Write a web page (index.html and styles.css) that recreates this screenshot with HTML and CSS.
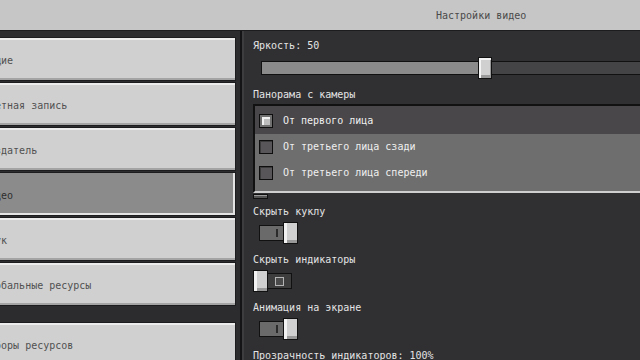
FILE: index.html
```html
<!DOCTYPE html>
<html lang="ru">
<head>
<meta charset="utf-8">
<title>Настройки видео</title>
<link rel="stylesheet" href="styles.css">
</head>
<body>
<div class="screen">
  <header class="topbar">
    <h1 class="title">Настройки видео</h1>
  </header>
  <div class="main">
    <nav class="nav">
      <div class="navbtn">Общие</div>
      <div class="navbtn">Учетная запись</div>
      <div class="navbtn">Создатель</div>
      <div class="navbtn selected">Видео</div>
      <div class="navbtn">Звук</div>
      <div class="navbtn">Глобальные ресурсы</div>
      <div class="navbtn section">Наборы ресурсов</div>
    </nav>
    <section class="panel">
      <div class="label">Яркость: 50</div>
      <div class="slider">
        <div class="track">
          <div class="fill" style="width:221px"></div>
          <div class="rest"></div>
        </div>
        <div class="thumb"></div>
      </div>

      <div class="label gap-md">Панорама с камеры</div>
      <div class="dd-list">
        <div class="dd-row hover"><span class="box checked"></span><span>От первого лица</span></div>
        <div class="dd-row"><span class="box"></span><span>От третьего лица сзади</span></div>
        <div class="dd-row"><span class="box"></span><span>От третьего лица спереди</span></div>
      </div>
      <div class="dd-stub"></div>

      <div class="label gap-sm">Скрыть куклу</div>
      <div class="toggle on">
        <div class="ttrack"><span class="mark-i"></span></div>
        <div class="knob"></div>
      </div>

      <div class="label gap-md">Скрыть индикаторы</div>
      <div class="toggle off">
        <div class="knob"></div>
        <div class="ttrack"><span class="mark-o"></span></div>
      </div>

      <div class="label gap-md">Анимация на экране</div>
      <div class="toggle on">
        <div class="ttrack"><span class="mark-i"></span></div>
        <div class="knob"></div>
      </div>

      <div class="label gap-md">Прозрачность индикаторов: 100%</div>
    </section>
  </div>
</div>
</body>
</html>
```

FILE: styles.css
```css
* {
  box-sizing: border-box;
  margin: 0;
  padding: 0;
}

html,
body {
  width: 640px;
  height: 360px;
  overflow: hidden;
}

body {
  background: #303033;
  font-family: "DejaVu Sans Mono", "Liberation Mono", monospace;
  font-size: 10px;
  line-height: 12px;
}

.screen {
  width: 640px;
  height: 360px;
  display: flex;
  flex-direction: column;
  overflow: hidden;
}

/* header */
.topbar {
  flex: none;
  height: 31px;
  background: #c6c6c6;
  border-bottom: 1px solid #1c1c1e;
  display: flex;
  align-items: center;
  padding-left: 436px;
}

.title {
  font-size: 10px;
  font-weight: normal;
  line-height: 12px;
  color: #4a4a4a;
  margin-top: 2px;
  white-space: nowrap;
}

.main {
  flex: 1;
  min-height: 0;
  display: flex;
}

/* left navigation (scrolled partly out of view) */
.nav {
  flex: none;
  width: 270px;
  margin-left: -30px;
  padding: 6px 4px 0 0;
  background: #2c2c2e;
  display: flex;
  flex-direction: column;
  gap: 1px;
  overflow: hidden;
}

.navbtn {
  flex: none;
  height: 44px;
  background: #d0d0d0;
  border: 1px solid #1c1c1e;
  box-shadow: inset 0 2px 0 #ececec, inset 0 -2px 0 #a4a4a4;
  color: #505050;
  padding-left: 12px;
  line-height: 45px;
  white-space: nowrap;
}

.navbtn.selected {
  background: #8b8b8b;
  color: #2e2e2e;
  box-shadow: inset -2px -2px 0 #e4e4e4;
}

.navbtn.section {
  margin-top: 15px;
}

/* right settings panel */
.panel {
  flex: 1;
  min-width: 0;
  overflow: hidden;
  border-left: 2px solid #141416;
  box-shadow: inset 2px 0 0 #3d3d40;
  padding: 9px 0 0 11px;
  display: flex;
  flex-direction: column;
  align-items: flex-start;
}

.label {
  flex: none;
  color: #e4e4e4;
  white-space: nowrap;
}

.gap-md {
  margin-top: 10px;
}

.gap-sm {
  margin-top: 7px;
}

/* slider */
.slider {
  flex: none;
  position: relative;
  width: 420px;
  height: 22px;
  margin: 5px 0 0 8px;
  display: flex;
  align-items: center;
}

.track {
  width: 100%;
  height: 14px;
  display: flex;
  border: 1px solid #111;
  border-right: none;
}

.fill {
  background: #8b8b8b;
}

.rest {
  flex: 1;
  background: #444446;
}

.thumb {
  position: absolute;
  left: 217px;
  top: 0;
  width: 14px;
  height: 22px;
  background: #d0d0d0;
  border: 1px solid #111;
  box-shadow: inset 2px 2px 0 #f4f4f4, inset -1px -3px 0 #9a9a9a;
}

/* open dropdown */
.dd-list {
  flex: none;
  width: 420px;
  height: 89px;
  margin-top: 3px;
  background: #6e6e6e;
  border: 2px solid #111;
  border-right: none;
  border-bottom: 2px solid #cfcfcf;
  display: flex;
  flex-direction: column;
}

.dd-row {
  flex: none;
  height: 26px;
  display: flex;
  align-items: center;
  gap: 10px;
  padding-left: 4px;
  color: #f0f0f0;
  white-space: nowrap;
}

.dd-row.hover {
  height: 28px;
  padding-top: 2px;
  background: #49474a;
}

.box {
  flex: none;
  width: 14px;
  height: 14px;
  border: 1px solid #0e0e0e;
  background: #585658;
  box-shadow: inset 1px 1px 0 #3c3b3c;
}

.box.checked {
  background: #bdbdbd;
  box-shadow: inset 0 0 0 2px #707070, inset 4px 4px 0 #f2f2f2;
}

.dd-stub {
  flex: none;
  width: 15px;
  height: 5px;
  margin-top: 1px;
  border: 1px solid #111;
  background: #555;
  box-shadow: inset 0 1px 0 #9a9a9a;
}

/* toggles */
.toggle {
  flex: none;
  height: 22px;
  margin-top: 4px;
  display: flex;
  align-items: center;
}

.knob {
  position: relative;
  z-index: 1;
  flex: none;
  width: 15px;
  height: 22px;
  background: #d0d0d0;
  border: 1px solid #111;
  box-shadow: inset 3px 0 0 #f2f2f2, inset 0 -3px 0 #999;
}

.ttrack {
  flex: none;
  width: 26px;
  height: 16px;
  border: 1px solid #111;
  display: flex;
  align-items: center;
}

.toggle.on .ttrack {
  margin-left: 6px;
  background: #6a6a6a;
  justify-content: flex-end;
  padding-right: 6px;
}

.toggle.on .knob {
  margin-left: -2px;
}

.toggle.off .ttrack {
  margin-left: -2px;
  background: #3d3d3d;
  justify-content: center;
}

.mark-i {
  width: 2px;
  height: 8px;
  background: #2b2b2b;
}

.mark-o {
  width: 9px;
  height: 9px;
  border: 1px solid #b4b4b4;
  background: #4a4a4a;
}
```
